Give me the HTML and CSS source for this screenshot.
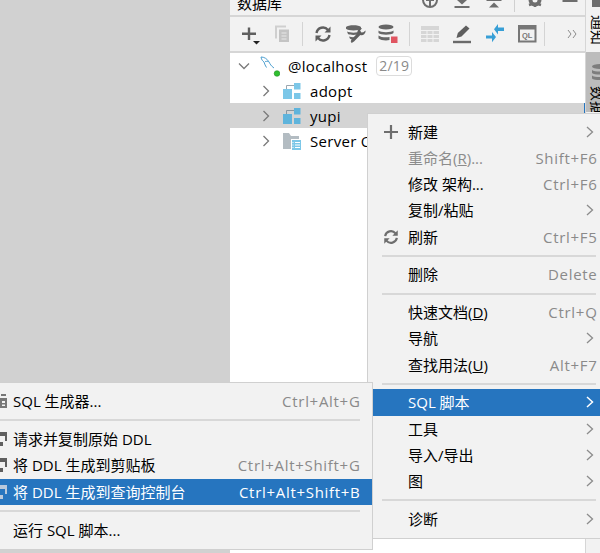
FILE: index.html
```html
<!DOCTYPE html>
<html lang="zh">
<head>
<meta charset="utf-8">
<title>数据库</title>
<link rel="stylesheet" href="styles.css">
</head>
<body>
<div class="app">
  <div class="backdrop"></div>
  <main class="panel">
    <header class="head">
      <span class="head-title">数据库</span>
      <div class="head-tools">
        <svg class="ht" width="24" height="15" viewBox="0 0 24 15"><circle cx="12" cy="0" r="7" fill="none" stroke="#6e6e6e" stroke-width="2"/><path d="M12 1v6M8 0h8" fill="none" stroke="#6e6e6e" stroke-width="2"/></svg>
        <svg class="ht" width="24" height="15" viewBox="0 0 24 15"><path d="M7 0h10l-5 4.500z" fill="#6e6e6e"/><path d="M4.500 7h15" stroke="#6e6e6e" stroke-width="2"/></svg>
        <svg class="ht" width="24" height="15" viewBox="0 0 24 15"><path d="M7 7.500h10l-5-5z" fill="#6e6e6e"/><path d="M4.500 0h15" stroke="#6e6e6e" stroke-width="2"/></svg>
        <span class="ht-sep"></span>
        <svg class="ht" width="24" height="15" viewBox="0 0 24 15"><circle cx="12" cy="0" r="4.500" fill="none" stroke="#6e6e6e" stroke-width="4"/><path d="M6 5l3-1M18 5l-3-1M12 7V5" stroke="#6e6e6e" stroke-width="2.500"/></svg>
        <svg class="ht ht-last" width="24" height="15" viewBox="0 0 24 15"><path d="M4.500 1h15" stroke="#6e6e6e" stroke-width="2"/></svg>
      </div>
    </header>
    <div class="toolbar">
      <button class="tb">
        <svg width="24" height="24" viewBox="0 0 24 24"><path d="M12 5.500v12.500M5 11.800h14" stroke="#5f5f5f" stroke-width="2.400"/><path d="M16 19h7l-3.500 3.500z" fill="#222"/></svg>
      </button>
      <button class="tb">
        <svg width="20" height="20" viewBox="0 0 20 20"><path d="M3 1.500h11v2H5v11H3z" fill="#cfcfcf"/><path d="M7 5.500h10v12.500H7z" fill="#c4c4c4"/><path d="M9.500 9h5M9.500 12h5M9.500 15h5" stroke="#e8e8e8"/></svg>
      </button>
      <span class="tb-sep"></span>
      <button class="tb">
        <svg width="20" height="20" viewBox="0 0 20 20"><path d="M3.500 9a6.500 6.500 0 0 1 11.500-3M16.500 11a6.500 6.500 0 0 1-11.500 3" fill="none" stroke="#5f5f5f" stroke-width="2.400"/><path d="M17.500 2.500v6h-6zM2.500 17.500v-6h6z" fill="#5f5f5f"/></svg>
      </button>
      <button class="tb">
        <svg width="20" height="20" viewBox="0 0 20 20"><path d="M0 3c2-2.200 13-2.200 15 0v1.800C13 7 2 7 0 4.800zM1 7.500c3 1.500 10 1.500 13 0l-1 2.500c-2 1.200-9 1.200-11 0zM3 12.500c1.800.8 4 .9 6 .7l-1 2c-1 .3-3 .1-4-.4zM4.500 17l2 .3-.5 1.500z" fill="#666"/><path d="M19.500 6.500a4 4 0 0 1-5.200 4.400L8 17.500 5.500 19 5 16l6.500-6.700a4 4 0 0 1 4.600-5l-2 2.200 1.300 2 2-.3z" fill="#5f5f5f"/></svg>
      </button>
      <button class="tb">
        <svg width="20" height="20" viewBox="0 0 20 20"><ellipse cx="8" cy="3" rx="7.500" ry="2.600" fill="#666"/><path d="M.5 6.500c2 2.200 13 2.200 15 0v2.500c-2 2.200-13 2.200-15 0zM.5 11.500c2 1.800 8 2.200 11 1.500v3c-3 .8-9 .4-11-1.500z" fill="#666"/><rect x="13" y="12.500" width="6.500" height="6.500" fill="#e05561"/></svg>
      </button>
      <span class="tb-sep"></span>
      <button class="tb">
        <svg width="20" height="18" viewBox="0 0 20 18"><rect x="1" y="1" width="18" height="16" fill="#d6d6d6"/><path d="M1 5.500h18M1 9.500h18M1 13.500h18M7 5.500v11.500M13 5.500v11.500" stroke="#f2f2f2"/></svg>
      </button>
      <button class="tb">
        <svg width="20" height="20" viewBox="0 0 20 20"><path d="M14 1.500l3.500 3-8 8-5 1.500 1.300-5z" fill="#5f5f5f"/><path d="M1 18h18" stroke="#6a6a6a" stroke-width="2.400"/></svg>
      </button>
      <button class="tb">
        <svg width="20" height="20" viewBox="0 0 20 20"><path d="M19 3.500h-6V0L9 5.200l4 5.300V7h6zM1 11.500h6V8l4 5-4 5.300v-3.800H1z" fill="#389fd6"/></svg>
      </button>
      <button class="tb">
        <svg width="20" height="18" viewBox="0 0 20 18"><rect x="2" y="1" width="16.500" height="15.500" fill="none" stroke="#777" stroke-width="2"/><rect x="2" y="1" width="16.500" height="3.500" fill="#777"/><text x="10.200" y="13.300" class="ql">QL</text></svg>
      </button>
      <span class="tb-sep tb-sep-wide"></span>
      <svg class="tb-more" width="10" height="10" viewBox="0 0 10 10"><path d="M1 1l3 4-3 4M6 1l3 4-3 4" fill="none" stroke="#8c8c8c" stroke-width="1"/></svg>
    </div>
    <div class="tree">
      <div class="row row-root">
        <svg class="chev" width="12" height="12" viewBox="0 0 12 12"><path d="M1 3.500l5 5 5-5" fill="none" stroke="#7a7a7a" stroke-width="1.300"/></svg>
        <svg class="ticon" width="20" height="22" viewBox="0 0 20 22"><path d="M1 2c3 0 6 1.500 8 5 1 1.800 2 4 5 6M1 2c.5 3 1.800 4 3 5 .5 2 1.500 4 2.500 5.500M5 6.500c1 0 2.500-.5 3 .5" fill="none" stroke="#4d9fd0" stroke-width="1"/><circle cx="17" cy="18.500" r="2.800" fill="#2fbf2f" stroke="#1f8f1f" stroke-width=".6"/></svg>
        <span class="name">@localhost</span>
        <span class="badge">2/19</span>
      </div>
      <div class="row">
        <svg class="chev" width="12" height="12" viewBox="0 0 12 12"><path d="M3.500 1l5 5-5 5" fill="none" stroke="#7a7a7a" stroke-width="1.300"/></svg>
        <svg class="ticon" width="20" height="20" viewBox="0 0 20 20"><rect x="1" y="8" width="9" height="10" fill="#7cc7e8"/><rect x="12" y="2" width="6.500" height="6.500" fill="#7cc7e8"/><rect x="12" y="12" width="6.500" height="6" fill="#7cc7e8"/><path d="M4.500 8V4.500H12" fill="none" stroke="#9aa7b0"/></svg>
        <span class="name">adopt</span>
      </div>
      <div class="row row-sel">
        <svg class="chev" width="12" height="12" viewBox="0 0 12 12"><path d="M3.500 1l5 5-5 5" fill="none" stroke="#7a7a7a" stroke-width="1.300"/></svg>
        <svg class="ticon" width="20" height="20" viewBox="0 0 20 20"><rect x="1" y="8" width="9" height="10" fill="#5fb4dc"/><rect x="12" y="2" width="6.500" height="6.500" fill="#5fb4dc"/><rect x="12" y="12" width="6.500" height="6" fill="#5fb4dc"/><path d="M4.500 8V4.500H12" fill="none" stroke="#8a97a0"/></svg>
        <span class="name">yupi</span>
      </div>
      <div class="row">
        <svg class="chev" width="12" height="12" viewBox="0 0 12 12"><path d="M3.500 1l5 5-5 5" fill="none" stroke="#7a7a7a" stroke-width="1.300"/></svg>
        <svg class="ticon" width="20" height="20" viewBox="0 0 20 20"><path d="M1 2h6l2 3h8v3H9v10H1z" fill="#b3bcc2"/><rect x="10" y="9" width="9" height="10" fill="#7cc7e8"/><path d="M13 11.500h5M13 14h5M13 16.500h5" stroke="#fff"/><path d="M10.500 11.500h1M10.500 14h1M10.500 16.500h1" stroke="#fff"/></svg>
        <span class="name">Server Objects</span>
      </div>
    </div>
  </main>
  <aside class="rail">
    <div class="rail-tab">
      <svg class="rail-bell" width="14" height="9" viewBox="0 0 14 9"><path d="M6 0h8v7H6z" fill="#6e6e6e"/></svg>
      <span class="rail-text">通知</span>
    </div>
    <div class="rail-tab rail-tab-on">
      <svg class="rail-db" width="14" height="17" viewBox="0 0 14 17"><ellipse cx="14" cy="2.500" rx="8" ry="2.500" fill="#7d7d7d"/><path d="M6 6c2 2 14 2 16 0v3c-2 2-14 2-16 0zM6 11.500c2 2 14 2 16 0v3c-2 2-14 2-16 0z" fill="#7d7d7d"/></svg>
      <span class="rail-text">数据</span>
    </div>
  </aside>

  <nav class="menu menu-main">
    <div class="mi"><span class="mi-icon"><svg width="16" height="16" viewBox="0 0 16 16"><path d="M8 1v14M1 8h14" stroke="#6e6e6e" stroke-width="2.200"/></svg></span><span class="mi-label">新建</span><svg class="arrow" width="8" height="12" viewBox="0 0 8 12"><path d="M1 1l5.500 5L1 11" fill="none" stroke="#8c8c8c" stroke-width="1.300"/></svg></div>
    <div class="mi mi-off"><span class="mi-icon"></span><span class="mi-label">重命名(<u>R</u>)...</span><span class="key">Shift+F6</span></div>
    <div class="mi"><span class="mi-icon"></span><span class="mi-label">修改 架构...</span><span class="key">Ctrl+F6</span></div>
    <div class="mi"><span class="mi-icon"></span><span class="mi-label">复制/粘贴</span><svg class="arrow" width="8" height="12" viewBox="0 0 8 12"><path d="M1 1l5.500 5L1 11" fill="none" stroke="#8c8c8c" stroke-width="1.300"/></svg></div>
    <div class="mi"><span class="mi-icon"><svg width="18" height="18" viewBox="0 0 20 20"><path d="M3.500 9a6.500 6.500 0 0 1 11.500-3M16.500 11a6.500 6.500 0 0 1-11.500 3" fill="none" stroke="#6e6e6e" stroke-width="2.400"/><path d="M17.500 2.500v6h-6zM2.500 17.500v-6h6z" fill="#6e6e6e"/></svg></span><span class="mi-label">刷新</span><span class="key">Ctrl+F5</span></div>
    <div class="sep"></div>
    <div class="mi"><span class="mi-icon"></span><span class="mi-label">删除</span><span class="key">Delete</span></div>
    <div class="sep"></div>
    <div class="mi"><span class="mi-icon"></span><span class="mi-label">快速文档(<u>D</u>)</span><span class="key">Ctrl+Q</span></div>
    <div class="mi"><span class="mi-icon"></span><span class="mi-label">导航</span><svg class="arrow" width="8" height="12" viewBox="0 0 8 12"><path d="M1 1l5.500 5L1 11" fill="none" stroke="#8c8c8c" stroke-width="1.300"/></svg></div>
    <div class="mi"><span class="mi-icon"></span><span class="mi-label">查找用法(<u>U</u>)</span><span class="key">Alt+F7</span></div>
    <div class="sep"></div>
    <div class="mi mi-on"><span class="mi-icon"></span><span class="mi-label">SQL 脚本</span><svg class="arrow" width="8" height="12" viewBox="0 0 8 12"><path d="M1 1l5.500 5L1 11" fill="none" stroke="#fff" stroke-width="1.500"/></svg></div>
    <div class="mi"><span class="mi-icon"></span><span class="mi-label">工具</span><svg class="arrow" width="8" height="12" viewBox="0 0 8 12"><path d="M1 1l5.500 5L1 11" fill="none" stroke="#8c8c8c" stroke-width="1.300"/></svg></div>
    <div class="mi"><span class="mi-icon"></span><span class="mi-label">导入/导出</span><svg class="arrow" width="8" height="12" viewBox="0 0 8 12"><path d="M1 1l5.500 5L1 11" fill="none" stroke="#8c8c8c" stroke-width="1.300"/></svg></div>
    <div class="mi"><span class="mi-icon"></span><span class="mi-label">图</span><svg class="arrow" width="8" height="12" viewBox="0 0 8 12"><path d="M1 1l5.500 5L1 11" fill="none" stroke="#8c8c8c" stroke-width="1.300"/></svg></div>
    <div class="sep"></div>
    <div class="mi"><span class="mi-icon"></span><span class="mi-label">诊断</span><svg class="arrow" width="8" height="12" viewBox="0 0 8 12"><path d="M1 1l5.500 5L1 11" fill="none" stroke="#8c8c8c" stroke-width="1.300"/></svg></div>
  </nav>

  <nav class="menu menu-sub">
    <div class="mi"><span class="mi-icon"><svg class="cut" width="15" height="16" viewBox="0 0 15 16"><path d="M9 1h5v2H9zM8 5h7v10H8z" fill="#777"/><path d="M10 8h3v2h-3zM10 11.500h3v1.500h-3z" fill="#f2f2f2"/></svg></span><span class="mi-label">SQL 生成器...</span><span class="key">Ctrl+Alt+G</span></div>
    <div class="sep"></div>
    <div class="mi"><span class="mi-icon"><svg class="cut" width="15" height="16" viewBox="0 0 15 16"><path d="M7 1h8v9h-2V5H8zM7 11h4v4H7z" fill="#5f5f5f"/></svg></span><span class="mi-label">请求并复制原始 DDL</span></div>
    <div class="mi"><span class="mi-icon"><svg class="cut" width="15" height="16" viewBox="0 0 15 16"><path d="M7 1h8v9h-2V5H8zM7 11h4v4H7z" fill="#5f5f5f"/></svg></span><span class="mi-label">将 DDL 生成到剪贴板</span><span class="key">Ctrl+Alt+Shift+G</span></div>
    <div class="mi mi-on"><span class="mi-icon"><svg class="cut" width="15" height="16" viewBox="0 0 15 16"><path d="M7 1h8v9h-2V5H8zM7 11h4v4H7z" fill="#b9c9dc"/></svg></span><span class="mi-label">将 DDL 生成到查询控制台</span><span class="key">Ctrl+Alt+Shift+B</span></div>
    <div class="sep"></div>
    <div class="mi"><span class="mi-icon"></span><span class="mi-label">运行 SQL 脚本...</span></div>
  </nav>
</div>
</body>
</html>
```
FILE: styles.css
```css
* { box-sizing: border-box; }
html, body { margin: 0; height: 100%; overflow: hidden; }
body {
  font-family: "Open Sans", "Noto Sans CJK SC", sans-serif;
  font-size: 15px;
  color: #000;
  background: #f2f2f2;
}
.app { position: relative; display: flex; width: 600px; height: 553px; overflow: hidden; }
.backdrop { width: 230px; flex: none; background: #d1d1d1; }
.panel { width: 355px; flex: none; display: flex; flex-direction: column; background: #fff; }
.head {
  height: 17px; flex: none; display: flex; justify-content: space-between; align-items: flex-start;
  overflow: hidden; background: #f2f2f2; border-bottom: 2px solid #d6d6d6; padding-left: 7px;
}
.head-title { line-height: 20px; margin-top: -7px; }
.head-tools { display: flex; align-items: flex-start; height: 15px; padding-right: 3px; }
.ht { display: block; margin-left: 8px; }
.ht-last { margin-left: 11px; }
.ht-sep { width: 1px; height: 12px; background: #d0d0d0; margin-left: 8px; }
.toolbar {
  height: 36px; flex: none; display: flex; align-items: center;
  padding-left: 3px; background: #f2f2f2; border-bottom: 2px solid #d6d6d6;
}
.tb {
  all: unset; width: 32.5px; height: 34px; flex: none; display: flex; align-items: center; justify-content: center;
}
.tb-sep { width: 9px; height: 24px; flex: none; display: flex; justify-content: center; }
.tb-sep::before { content: ""; width: 1px; height: 100%; background: #d4d4d4; }
.tb-sep-wide { margin-left: -4px; }
.tb-more { flex: none; margin-left: 18px; }
.ql { font: bold 7.500px "Liberation Sans", sans-serif; fill: #777; text-anchor: middle; }
.tree { flex: 1; }
.row { height: 25px; display: flex; align-items: center; padding-left: 30px; white-space: nowrap; overflow: hidden; }
.row-root { padding-left: 8px; }
.row-sel { background: #d4d4d4; position: relative; }
.row-sel::after { content: ""; position: absolute; right: 0; top: 0; bottom: 0; width: 1px; background: #2675bf; }
.chev { flex: none; margin-right: 10px; }
.ticon { flex: none; margin-right: 8px; }
.name { letter-spacing: .3px; }
.badge {
  margin-left: 9px; height: 20px; padding: 0 2px; border: 1px solid #dcdcdc; border-radius: 4px;
  color: #8a8a8a; font-size: 14px; line-height: 18px; letter-spacing: .2px;
}
.rail { width: 15px; flex: none; border-left: 1px solid #d6d6d6; display: flex; flex-direction: column; overflow: hidden; }
.rail-tab { height: 52px; overflow: hidden; display: flex; flex-direction: column; }
.rail-tab-on { height: 60px; background: #bcbcbc; padding-top: 12px; }
.rail-bell, .rail-db { flex: none; }
.rail-bell { margin-bottom: 6px; }
.rail-db { margin-bottom: 5px; }
.rail-text {
  writing-mode: vertical-rl; text-orientation: sideways; font-size: 15px; line-height: 20px;
  width: 20px; margin-left: 2px; white-space: nowrap;
}
.menu { position: absolute; background: #f2f2f2; display: flex; flex-direction: column; border: 1px solid #d0d0d0; }
.menu-main { left: 367px; top: 113px; width: 240px; height: 426px; padding: 4.500px 10px 5px 0; }
.menu-sub { left: -8px; top: 382px; width: 381px; height: 168px; padding: 5px 0; border-left: 0; }
.mi { height: 26.250px; flex: none; display: flex; align-items: center; white-space: nowrap; }
.mi-icon { width: 40px; flex: none; display: flex; justify-content: center; align-items: center; padding-left: 6px; }
.menu-sub .mi-icon { width: 21px; justify-content: flex-start; padding-left: 0; }
.menu-sub .mi { padding-right: 11.500px; }
.cut { display: block; }
.mi-label { flex: 1; line-height: 20px; }
.key { color: #8a8a8a; letter-spacing: .7px; }
.menu-main .key { margin-right: -1.500px; }
.arrow { flex: none; margin-right: 2px; }
.mi-off .mi-label { color: #8c8c8c; }
.mi-on { background: #2675bf; color: #fff; }
.mi-on .key { color: #fff; }
.menu-main .mi-on { margin-right: -10px; padding-right: 10px; }
.sep { height: 11.500px; flex: none; position: relative; }
.sep::before { content: ""; position: absolute; left: 0; right: 0; top: 5px; height: 2px; background: #d8d8d8; }
.menu-main .sep { margin-left: 14px; }
.menu-sub .sep { height: 11.750px; margin-left: 8px; margin-right: 12px; }
```
